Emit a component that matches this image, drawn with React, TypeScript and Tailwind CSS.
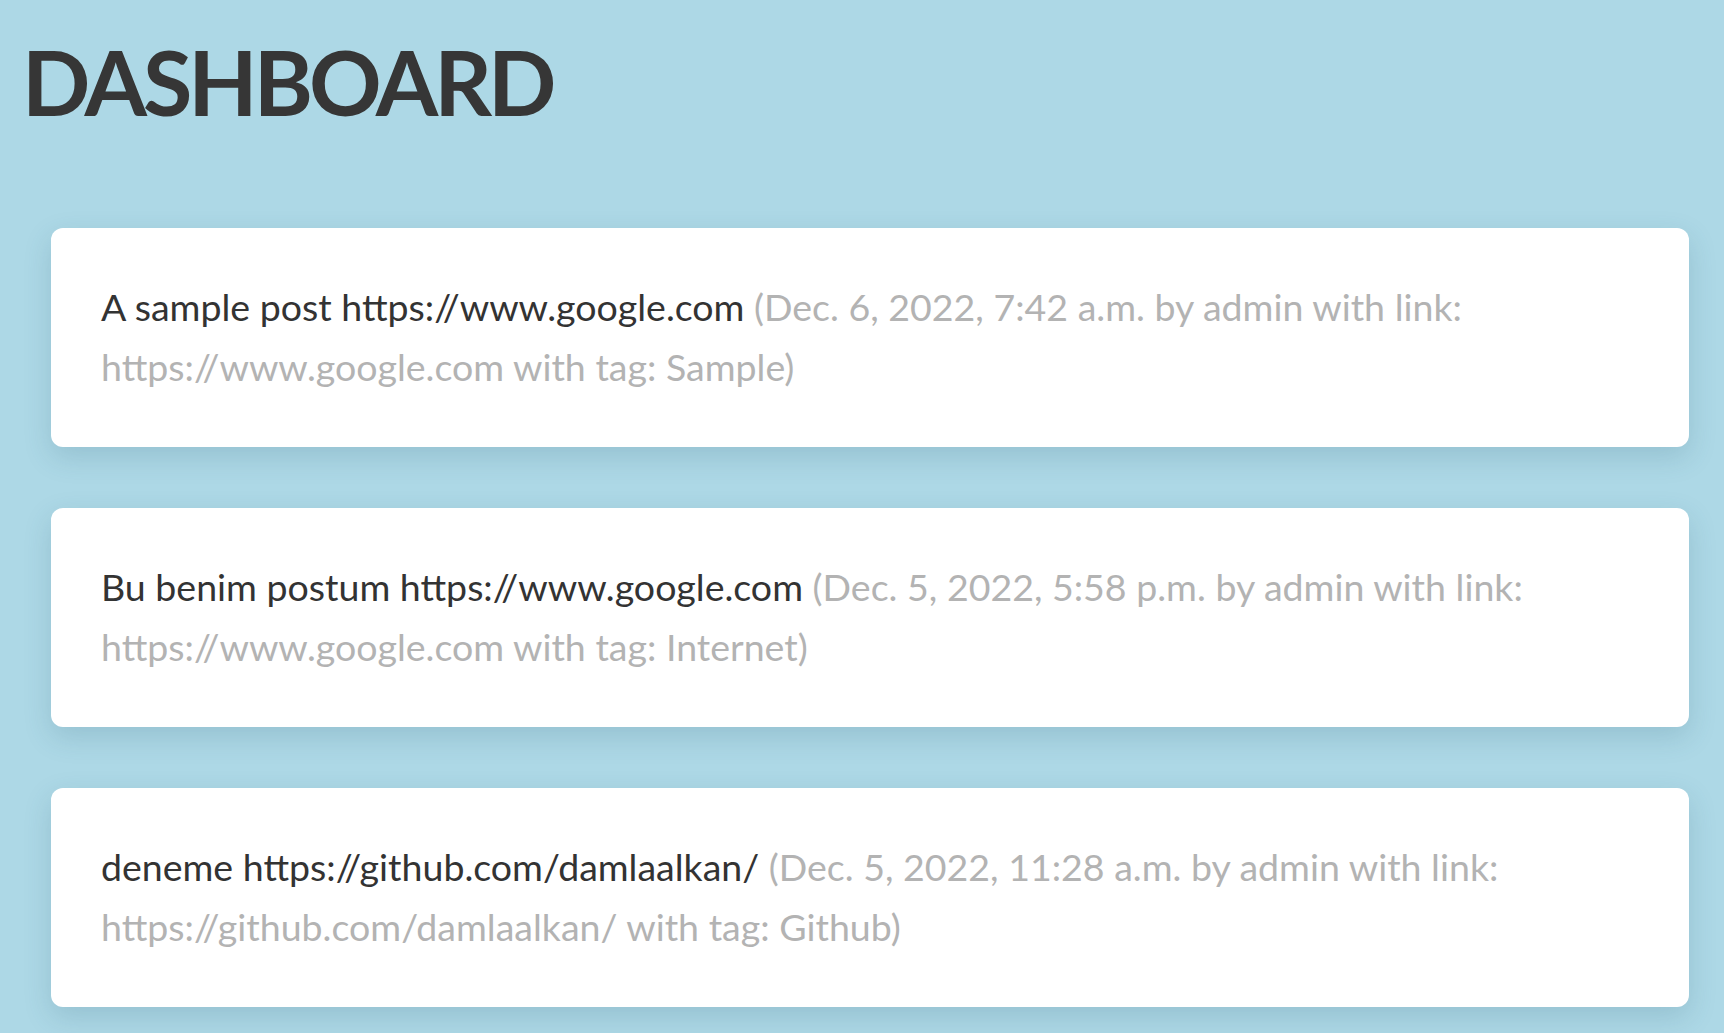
const POSTS = [
  {
    id: 1,
    title: "A sample post https://www.google.com",
    meta: "(Dec. 6, 2022, 7:42 a.m. by admin with link: https://www.google.com with tag: Sample)",
  },
  {
    id: 2,
    title: "Bu benim postum https://www.google.com",
    meta: "(Dec. 5, 2022, 5:58 p.m. by admin with link: https://www.google.com with tag: Internet)",
  },
  {
    id: 3,
    title: "deneme https://github.com/damlaalkan/",
    meta: "(Dec. 5, 2022, 11:28 a.m. by admin with link: https://github.com/damlaalkan/ with tag: Github)",
  },
];

export default function App() {
  return (
    <div className="min-h-screen bg-[#add8e6] font-['Lato',sans-serif] overflow-hidden">
      {/* Header */}
      <h1 className="pl-[22px] pt-[36px] text-[90px] leading-none font-bold text-[#363636] tracking-[-4px]">
        DASHBOARD
      </h1>

      {/* Posts */}
      <div className="mt-[102px] ml-[51px] mr-[35px] flex flex-col gap-[61px]">
        {POSTS.map((post) => (
          <div
            key={post.id}
            className="h-[219px] bg-white rounded-[12px] shadow-[0_10px_28px_rgba(40,90,110,0.18)] px-[50px] pt-[49px]"
          >
            <p className="text-[37.5px] leading-[60px] text-[#333333]">
              {post.title}{" "}
              <span className="text-[#b3b3b3]">{post.meta}</span>
            </p>
          </div>
        ))}
      </div>
    </div>
  );
}
